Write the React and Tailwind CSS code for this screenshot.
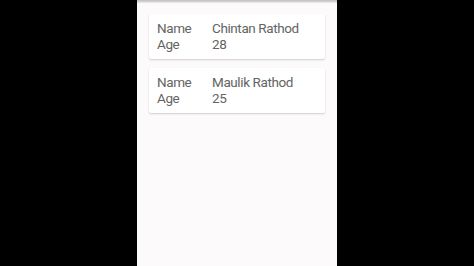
import React from "react";

const people = [
  { name: "Chintan Rathod", age: 28 },
  { name: "Maulik Rathod", age: 25 },
];

function App() {
  return (
    <main className="w-full h-[266px] bg-black flex justify-center">
      <section className="w-[200px] h-full bg-[#fcfafa] flex flex-col">
        <div className="h-[3px] bg-gradient-to-b from-[#bdbdbd] to-[#ececec]" />
        <div className="flex flex-col gap-[9px] px-3 pt-[11px] font-['Roboto',sans-serif] text-[13.5px] leading-4 tracking-[-0.4px] text-[#646464]">
          {people.map((p) => (
            <div
              key={p.name}
              className="h-[45px] bg-white rounded-[2px] shadow-[0_1px_2px_rgba(0,0,0,0.18)] pt-[6px] pl-2"
            >
              <div className="flex">
                <span className="w-[55px]">Name</span>
                <span>{p.name}</span>
              </div>
              <div className="flex">
                <span className="w-[55px]">Age</span>
                <span>{p.age}</span>
              </div>
            </div>
          ))}
        </div>
      </section>
    </main>
  );
}

export default App;
